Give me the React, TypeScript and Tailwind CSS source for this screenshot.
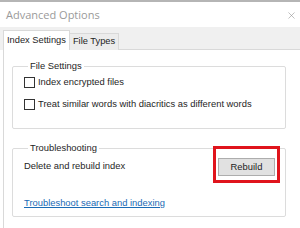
import { X } from "lucide-react";

function Check({ label }: { label: string }) {
  return (
    <label className="flex items-center gap-[3px]">
      <span className="h-[11px] w-[11px] border border-[#333] bg-white" />
      <span>{label}</span>
    </label>
  );
}

export default function App() {
  return (
    <div className="h-[228px] w-[300px] overflow-hidden border-t-2 border-[#b5b5b5] bg-white font-['Liberation_Sans',sans-serif] text-[9.4px] text-[#1e1e1e]">
      {/* title bar */}
      <div className="flex h-[25px] items-center justify-between pl-[6px] pr-[3px] pt-px">
        <span className="font-['Open_Sans',sans-serif] text-[11px] text-[#9a9a9a]">Advanced Options</span>
        <X className="h-[11px] w-[11px] text-[#8a8a8a]" strokeWidth={1.2} />
      </div>

      {/* tabs */}
      <div className="flex h-[23px] items-end bg-[#f0f0f0] pl-[3px]">
        <div className="relative z-10 flex h-[20px] items-center border border-b-0 border-[#d9d9d9] bg-white px-[3px] text-[9.3px]">
          Index Settings
        </div>
        <div className="flex h-[17px] items-center border border-b-0 border-l-0 border-[#d9d9d9] bg-[#ececec] px-[3px] text-[9.3px]">
          File Types
        </div>
      </div>

      {/* panel */}
      <div className="-mt-px ml-[3px] h-full border-l border-t border-[#d9d9d9] bg-white pl-[8px] pr-[14px] pt-[9px]">
        <fieldset className="h-[70px] rounded-[2px] border border-[#dcdcdc] pl-[11px]">
          <legend className="ml-[4px] px-[2px]">File Settings</legend>
          <div className="mt-[2px] flex flex-col gap-[8px]">
            <Check label="Index encrypted files" />
            <Check label="Treat similar words with diacritics as different words" />
          </div>
        </fieldset>

        <fieldset className="mt-[12px] h-[76px] rounded-[2px] border border-[#dcdcdc] pl-[11px] pr-[5px]">
          <legend className="ml-[4px] px-[2px]">Troubleshooting</legend>
          <div className="flex items-start justify-between">
            <span className="mt-[4px]">Delete and rebuild index</span>
            <div className="-mt-[9px] border-[3px] border-[#e0141c] px-[2px] pb-[4px] pt-[9px]">
              <button className="h-[18px] w-[57px] border border-[#adadad] bg-[#e1e1e1] text-[9.4px]">
                Rebuild
              </button>
            </div>
          </div>
          <a className="mt-[13px] block text-[#1a6bb5] underline">Troubleshoot search and indexing</a>
        </fieldset>
      </div>
    </div>
  );
}
